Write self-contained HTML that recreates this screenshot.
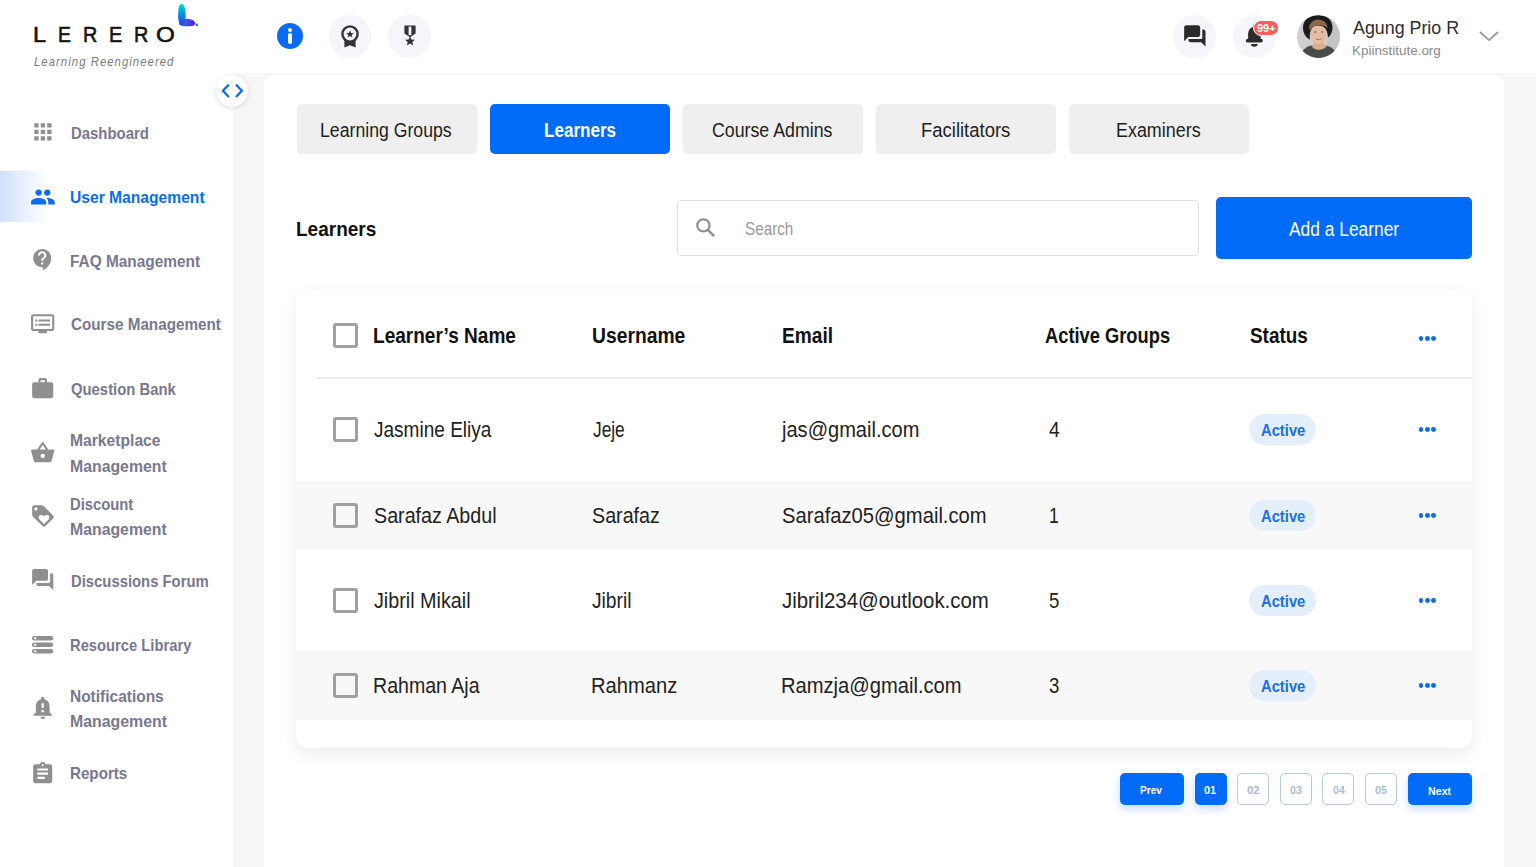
<!DOCTYPE html><html><head><meta charset="utf-8"><title>Lerero - Learners</title><style>
*{box-sizing:border-box;margin:0;padding:0}
html,body{width:1536px;height:867px;overflow:hidden;background:#f6f6f6;font-family:"Liberation Sans",sans-serif;position:relative}
.t{position:absolute;white-space:nowrap;line-height:1;transform-origin:0 50%}
.tc{position:absolute;width:600px;text-align:center;white-space:nowrap;line-height:1}
.tc span{display:inline-block;transform-origin:50% 50%}
.ic{position:absolute;overflow:visible}
.box{position:absolute}
</style></head><body>
<div class="box" style="left:0;top:0;width:232.5px;height:867px;background:#fff"></div>
<div class="t" style="left:33.01px;top:25.00px;font-size:21.5px;font-weight:normal;color:#141414;transform:scaleX(1.0909);-webkit-text-stroke:0.6px #141414">L</div>
<div class="t" style="left:58.10px;top:25.00px;font-size:21.5px;font-weight:normal;color:#141414;transform:scaleX(0.9000);-webkit-text-stroke:0.6px #141414">E</div>
<div class="t" style="left:82.68px;top:25.00px;font-size:21.5px;font-weight:normal;color:#141414;transform:scaleX(0.9214);-webkit-text-stroke:0.6px #141414">R</div>
<div class="t" style="left:109.08px;top:25.00px;font-size:21.5px;font-weight:normal;color:#141414;transform:scaleX(0.9231);-webkit-text-stroke:0.6px #141414">E</div>
<div class="t" style="left:133.68px;top:25.00px;font-size:21.5px;font-weight:normal;color:#141414;transform:scaleX(0.9214);-webkit-text-stroke:0.6px #141414">R</div>
<div class="t" style="left:156.07px;top:25.00px;font-size:21.5px;font-weight:normal;color:#141414;transform:scaleX(1.1267);-webkit-text-stroke:0.6px #141414">O</div>
<div class="t" style="left:34.10px;top:56.00px;font-size:12px;font-weight:normal;color:#7a7a7a;transform:scaleX(0.9455);font-style:italic;letter-spacing:1.1px">Learning Reengineered</div>
<svg class="ic" style="left:176px;top:2px;width:24px;height:26px" viewBox="0 0 24 26">
<defs><linearGradient id="lg1" x1="0" y1="0" x2="0" y2="1"><stop offset="0" stop-color="#00d8e0"/><stop offset="0.55" stop-color="#0a86e4"/><stop offset="1" stop-color="#4a30ee"/></linearGradient>
<linearGradient id="lg2" x1="0" y1="0" x2="1" y2="0"><stop offset="0" stop-color="#0c8ee2"/><stop offset="1" stop-color="#6a12ee"/></linearGradient></defs>
<path d="M3 20.5 C4.5 16.5 12 15.6 17.5 18.6 C20.2 20.2 19.6 23.8 16 24.1 C11 24.6 5.5 24.4 3.5 23 Z" fill="url(#lg2)"/>
<path d="M5.6 2.1 C8.6 2.1 9.8 8 9.6 14 C9.4 19.5 8.2 23.2 5.8 23.2 C3.2 23.2 2.1 19 2.1 13 C2.1 7 3 2.1 5.6 2.1 Z" fill="url(#lg1)"/>
<circle cx="20.8" cy="22.9" r="1.4" fill="#1a86e8"/>
</svg>
<div class="box" style="left:0;top:171px;width:233px;height:51px;background:linear-gradient(90deg,#cfe0fa 0px,rgba(226,236,252,0.9) 20px,rgba(255,255,255,0) 50px)"></div>
<div class="t" style="left:70.51px;top:126.00px;font-size:16.7px;font-weight:bold;color:#78788e;transform:scaleX(0.8934);">Dashboard</div>
<div class="t" style="left:69.86px;top:190.00px;font-size:16.7px;font-weight:bold;color:#0a6cf0;transform:scaleX(0.9365);">User Management</div>
<div class="t" style="left:69.88px;top:254.00px;font-size:16.7px;font-weight:bold;color:#78788e;transform:scaleX(0.9225);">FAQ Management</div>
<div class="t" style="left:70.80px;top:317.00px;font-size:16.7px;font-weight:bold;color:#78788e;transform:scaleX(0.9127);">Course Management</div>
<div class="t" style="left:71.00px;top:382.00px;font-size:16.7px;font-weight:bold;color:#78788e;transform:scaleX(0.8896);">Question Bank</div>
<div class="t" style="left:70.06px;top:433.00px;font-size:16.7px;font-weight:bold;color:#78788e;transform:scaleX(0.9382);">Marketplace</div>
<div class="t" style="left:70.05px;top:459.00px;font-size:16.7px;font-weight:bold;color:#78788e;transform:scaleX(0.9483);">Management</div>
<div class="t" style="left:70.11px;top:497.00px;font-size:16.7px;font-weight:bold;color:#78788e;transform:scaleX(0.8866);">Discount</div>
<div class="t" style="left:70.05px;top:522.00px;font-size:16.7px;font-weight:bold;color:#78788e;transform:scaleX(0.9483);">Management</div>
<div class="t" style="left:70.51px;top:574.00px;font-size:16.7px;font-weight:bold;color:#78788e;transform:scaleX(0.8894);">Discussions Forum</div>
<div class="t" style="left:70.12px;top:638.00px;font-size:16.7px;font-weight:bold;color:#78788e;transform:scaleX(0.8840);">Resource Library</div>
<div class="t" style="left:70.07px;top:689.00px;font-size:16.7px;font-weight:bold;color:#78788e;transform:scaleX(0.9271);">Notifications</div>
<div class="t" style="left:70.05px;top:714.00px;font-size:16.7px;font-weight:bold;color:#78788e;transform:scaleX(0.9503);">Management</div>
<div class="t" style="left:70.09px;top:766.00px;font-size:16.7px;font-weight:bold;color:#78788e;transform:scaleX(0.9082);">Reports</div>
<svg class="ic" style="left:29.65px;top:119.35px;width:25.80px;height:25.80px" viewBox="0 0 24 24"><path fill="#8f8f8f" d="M4 8h4V4H4v4zm6 12h4v-4h-4v4zm-6 0h4v-4H4v4zm0-6h4v-4H4v4zm6 0h4v-4h-4v4zm6-10v4h4V4h-4zm-6 4h4V4h-4v4zm6 6h4v-4h-4v4zm0 6h4v-4h-4v4z"/></svg>
<svg class="ic" style="left:29.79px;top:183.54px;width:25.82px;height:25.82px" viewBox="0 0 24 24"><path fill="#0a6cf0" d="M16 11c1.66 0 2.99-1.34 2.99-3S17.66 5 16 5c-1.66 0-3 1.34-3 3s1.34 3 3 3zm-8 0c1.66 0 2.99-1.34 2.99-3S9.66 5 8 5C6.34 5 5 6.34 5 8s1.34 3 3 3zm0 2c-2.33 0-7 1.170-7 3.5V19h14v-2.5c0-2.33-4.67-3.5-7-3.5zm8 0c-.29 0-.62.02-.97.05 1.16.84 1.970 1.97 1.97 3.45V19h6v-2.5c0-2.33-4.67-3.5-7-3.5z"/></svg>
<svg class="ic" style="left:30.29px;top:247.31px;width:25.49px;height:25.49px" viewBox="0 0 24 24"><path fill="#8f8f8f" d="M11.5 2C6.81 2 3 5.81 3 10.5S6.81 19 11.5 19h.5v3c4.86-2.34 8-7 8-11.5C20 5.81 16.19 2 11.5 2zm1 14.5h-2v-2h2v2zm0-3.5h-2c0-3.25 3-3 3-5 0-1.1-.9-2-2-2s-2 .9-2 2h-2c0-2.210 1.79-4 4-4s4 1.79 4 4c0 2.5-3 2.75-3 5z"/></svg>
<svg class="ic" style="left:30.13px;top:311.43px;width:25.35px;height:25.35px" viewBox="0 0 24 24"><path fill="#8f8f8f" d="M21 3H3c-1.1 0-2 .9-2 2v12c0 1.1.9 2 2 2h5v2h8v-2h5c1.1 0 1.99-.9 1.99-2L23 5c0-1.1-.9-2-2-2zm0 14H3V5h18v12zm-2-9H8v2h11V8zm0 4H8v2h11v-2zM7 8H5v2h2V8zm0 4H5v2h2v-2z"/></svg>
<svg class="ic" style="left:29.95px;top:375.93px;width:25.41px;height:25.41px" viewBox="0 0 24 24"><path fill="#8f8f8f" d="M20 6h-4V4c0-1.11-.89-2-2-2h-4c-1.11 0-2 .89-2 2v2H4c-1.11 0-1.99.89-1.99 2L2 19c0 1.11.89 2 2 2h16c1.11 0 2-.89 2-2V8c0-1.11-.89-2-2-2zm-6 0h-4V4h4v2z"/></svg>
<svg class="ic" style="left:29.93px;top:439.81px;width:25.45px;height:25.45px" viewBox="0 0 24 24"><path fill="#8f8f8f" d="M17.21 9l-4.38-6.56c-.19-.28-.51-.42-.83-.42-.32 0-.64.14-.83.43L6.79 9H2c-.55 0-1 .45-1 1 0 .09.01.18.04.27l2.54 9.27c.23.84 1 1.46 1.92 1.46h13c.92 0 1.69-.62 1.93-1.460l2.54-9.27L23 10c0-.55-.45-1-1-1h-4.79zM9 9l3-4.4L15 9H9zm3 8c-1.1 0-2-.9-2-2s.9-2 2-2 2 .9 2 2-.9 2-2 2z"/></svg>
<svg class="ic" style="left:29.72px;top:503.17px;width:25.86px;height:25.86px" viewBox="0 0 24 24"><path fill="#8f8f8f" d="M21.41 11.58l-9-9C12.05 2.22 11.55 2 11 2H4c-1.1 0-2 .9-2 2v7c0 .55.22 1.05.59 1.42l9 9c.36.36.86.58 1.41.58.55 0 1.05-.22 1.41-.59l7-7c.37-.36.59-.86.59-1.41 0-.55-.23-1.06-.59-1.42zM5.5 7C4.67 7 4 6.33 4 5.5S4.67 4 5.5 4 7 4.67 7 5.5 6.33 7 5.5 7zm11.77 8.27L13 19.54l-4.27-4.27C8.28 14.81 8 14.19 8 13.5c0-1.38 1.12-2.5 2.5-2.5.69 0 1.32.28 1.77.74l.73.72.73-.73c.45-.45 1.08-.73 1.77-.73 1.38 0 2.5 1.12 2.5 2.5 0 .69-.28 1.32-.73 1.77z"/></svg>
<svg class="ic" style="left:29.88px;top:566.78px;width:25.44px;height:25.44px" viewBox="0 0 24 24"><path fill="#8f8f8f" d="M20 6h-1v8c0 .55-.45 1-1 1H6v1c0 1.1.9 2 2 2h10l4 4V8c0-1.1-.9-2-2-2zm-3 5V4c0-1.1-.9-2-2-2H4c-1.1 0-2 .9-2 2v13l4-4h9c1.1 0 2-.9 2-2z"/></svg>
<svg class="ic" style="left:32px;top:635.5px;width:21.2px;height:17.5px" viewBox="0 0 21.2 17.5">
<rect x="0" y="0" width="21.2" height="4.5" rx="2.25" fill="#8f8f8f"/>
<rect x="0" y="6.5" width="21.2" height="4.5" rx="2.25" fill="#8f8f8f"/>
<rect x="0" y="13" width="21.2" height="4.5" rx="2.25" fill="#8f8f8f"/>
<rect x="2.1" y="1.2" width="2.2" height="2.1" rx="0.6" fill="#fff"/>
<rect x="2.1" y="7.7" width="2.2" height="2.1" rx="0.6" fill="#fff"/>
<rect x="2.1" y="14.2" width="2.2" height="2.1" rx="0.6" fill="#fff"/>
</svg>
<svg class="ic" style="left:29.03px;top:694.18px;width:27.44px;height:27.44px" viewBox="0 0 24 24"><path fill="#8f8f8f" d="M18 16v-5c0-3.07-1.64-5.64-4.5-6.32V4c0-.83-.67-1.5-1.5-1.5s-1.5.67-1.5 1.5v.68C7.63 5.36 6 7.92 6 11v5l-2 2v1h16v-1l-2-2zm-5 0h-2v-2h2v2zm0-4h-2V8h2v4zm-1 10c1.1 0 2-.9 2-2h-4c0 1.1.89 2 2 2z"/></svg>
<svg class="ic" style="left:29.98px;top:760.78px;width:25.35px;height:25.35px" viewBox="0 0 24 24"><path fill="#8f8f8f" d="M19 3h-4.18C14.4 1.84 13.3 1 12 1c-1.3 0-2.4.84-2.820 2H5c-1.1 0-2 .9-2 2v14c0 1.1.9 2 2 2h14c1.1 0 2-.9 2-2V5c0-1.1-.9-2-2-2zm-7 0c.55 0 1 .45 1 1s-.45 1-1 1-1-.45-1-1 .45-1 1-1zm2 14H7v-2h7v2zm3-4H7v-2h10v2zm0-4H7V7h10v2z"/></svg>
<div class="box" style="left:233px;top:0;width:1303px;height:73px;background:#fff"></div>
<div class="box" style="left:277px;top:23px;width:26px;height:26px;border-radius:50%;background:#0a6cf5"></div>
<div class="box" style="left:288.1px;top:28.3px;width:3.8px;height:3.8px;border-radius:50%;background:#fff"></div>
<div class="box" style="left:288.1px;top:33.4px;width:3.8px;height:10.7px;border-radius:2px;background:#fff"></div>
<div class="box" style="left:328.5px;top:15px;width:42.5px;height:42.5px;border-radius:50%;background:#f4f6fa"></div>
<svg class="ic" style="left:338px;top:24px;width:24px;height:25px" viewBox="0 0 24 25">
<path d="M6.4 12.5 L6.4 23.6 L12 21.3 L17.6 23.6 L17.6 12.5 Z" fill="#333"/>
<circle cx="12" cy="10" r="7.6" fill="#f4f6fa" stroke="#333" stroke-width="2.4"/>
<path d="M12 6.3 L13.1 8.9 L15.8 9.1 L13.7 10.9 L14.4 13.6 L12 12.1 L9.6 13.6 L10.3 10.9 L8.2 9.1 L10.9 8.9 Z" fill="#333"/>
</svg>
<div class="box" style="left:388.2px;top:15px;width:42.5px;height:42.5px;border-radius:50%;background:#f4f6fa"></div>
<svg class="ic" style="left:399.5px;top:25px;width:20px;height:22px" viewBox="0 0 20 22">
<path d="M4.4 0.5 H15.6 V8.6 L10 12.2 L4.4 8.6 Z" fill="#333"/>
<rect x="8.6" y="1.6" width="2.8" height="8.6" fill="#f4f6fa"/>
<path d="M10 11 L11.4 14.4 L15 14.7 L12.3 17 L13.2 20.6 L10 18.6 L6.8 20.6 L7.7 17 L5 14.7 L8.6 14.4 Z" fill="#333"/>
</svg>
<div class="box" style="left:1173px;top:14.8px;width:43px;height:43px;border-radius:50%;background:#f4f6fa"></div>
<svg class="ic" style="left:1181.75px;top:23.02px;width:25.65px;height:25.65px" viewBox="0 0 24 24"><path fill="#2b2b2b" d="M20 6h-1v8c0 .55-.45 1-1 1H6v1c0 1.1.9 2 2 2h10l4 4V8c0-1.1-.9-2-2-2zm-3 5V4c0-1.1-.9-2-2-2H4c-1.1 0-2 .9-2 2v13l4-4h9c1.1 0 2-.9 2-2z"/></svg>
<div class="box" style="left:1233px;top:14.8px;width:43px;height:43px;border-radius:50%;background:#f4f6fa"></div>
<svg class="ic" style="left:1245px;top:24px;width:19px;height:24px" viewBox="0 0 19 24">
<path d="M3.1 15.5 L3.1 10.5 C3.1 6 5.6 3.1 9.35 2.8 C13.1 3.1 15.6 6 15.6 10.5 L15.6 15.5 Z" fill="#2b2b2b"/>
<rect x="8.2" y="0.6" width="2.3" height="3.5" rx="1.1" fill="#2b2b2b"/>
<rect x="0.9" y="14.8" width="16.9" height="3.8" rx="1.9" fill="#2b2b2b"/>
<path d="M6 20.1 A3.35 2.7 0 0 0 12.7 20.1 Z" fill="#2b2b2b"/>
</svg>
<div class="box" style="left:1252.8px;top:19.5px;width:26.6px;height:16.3px;border-radius:8.2px;background:#fb5b5b;border:1.6px solid #fff"></div>
<div class="t" style="left:1256.80px;top:23.00px;font-size:11px;font-weight:bold;color:#fff;transform:scaleX(0.9981);">99+</div>
<svg class="ic" style="left:1297px;top:14.6px;width:43px;height:43px" viewBox="0 0 43 43">
<defs><clipPath id="av"><circle cx="21.5" cy="21.5" r="21.4"/></clipPath></defs>
<g clip-path="url(#av)">
<rect width="43" height="43" fill="#cfcfcf"/>
<rect x="30" y="0" width="13" height="43" fill="#c4c4c4"/>
<path d="M2 46 C3 36 9 31 15 30.5 L28 30.5 C34 31 40 35 42 46 Z" fill="#494d47"/>
<path d="M14.5 30.5 C16 36 27 36.5 30 30.5 Z" fill="#d9ae94"/>
<rect x="16.5" y="24" width="10" height="8" fill="#d8ad92"/>
<ellipse cx="21.3" cy="19" rx="8.2" ry="10.6" fill="#e3bca3"/>
<path d="M6 13 C6 4 13 0.3 21 0.3 C29 0.3 35.5 4 35.5 12.5 C35.5 17 33.5 21 31 22.5 C30.5 14 27 10.5 21 10.5 C15 10.5 12.5 15 12.8 23 C12.5 25 14 25.5 13.5 25 C9 23 6 18 6 13 Z" fill="#1b1b1b"/>
<path d="M12 12 C14 6 18 4.5 22 4.8 C26.5 5 30 7.5 30.5 13 C28 10.8 25 10 21.5 10.2 C17 10.5 14 12 12.8 15.5 Z" fill="#8a6a48"/>
<ellipse cx="18.3" cy="17" rx="1.1" ry="0.7" fill="#6b5a50"/>
<ellipse cx="25.2" cy="17" rx="1.1" ry="0.7" fill="#6b5a50"/>
<path d="M18.8 24 Q22 25.2 25 23.8" stroke="#b47d72" stroke-width="1.1" fill="none"/>
</g></svg>
<div class="t" style="left:1353.00px;top:18.00px;font-size:19px;font-weight:normal;color:#2d2d2d;transform:scaleX(0.9387);">Agung Prio R</div>
<div class="t" style="left:1352.01px;top:44.00px;font-size:13.5px;font-weight:normal;color:#8a8a8a;transform:scaleX(0.9944);">Kpiinstitute.org</div>
<svg class="ic" style="left:1479px;top:31px;width:20px;height:11px" viewBox="0 0 20 11"><path d="M1.5 1.5 L10 9.2 L18.5 1.5" stroke="#9a9a9a" stroke-width="1.8" fill="none" stroke-linecap="round" stroke-linejoin="round"/></svg>
<div class="box" style="left:264px;top:75px;width:1240px;height:800px;background:#fff;border-radius:9px 9px 0 0"></div>
<div class="box" style="left:216px;top:75px;width:32px;height:32px;border-radius:50%;background:#fff;box-shadow:0 1px 4px rgba(0,0,0,0.14)"></div>
<svg class="ic" style="left:220px;top:83px;width:24px;height:16px" viewBox="0 0 24 16"><path d="M8.2 2.3 L2.9 7.8 L8.2 13.3 M16.6 2.3 L21.9 7.8 L16.6 13.3" stroke="#0a6cf5" stroke-width="2.3" fill="none" stroke-linecap="round" stroke-linejoin="round"/></svg>
<div class="box" style="left:296.5px;top:104px;width:180.5px;height:50px;border-radius:5px;background:#efefef"></div>
<div class="t" style="left:320.32px;top:120.00px;font-size:20px;font-weight:normal;color:#1e1e1e;transform:scaleX(0.8839);">Learning Groups</div>
<div class="box" style="left:489.5px;top:104px;width:180.5px;height:50px;border-radius:5px;background:#006bf6"></div>
<div class="t" style="left:543.55px;top:120.00px;font-size:20px;font-weight:bold;color:#fff;transform:scaleX(0.8528);">Learners</div>
<div class="box" style="left:682.5px;top:104px;width:180.5px;height:50px;border-radius:5px;background:#efefef"></div>
<div class="t" style="left:711.61px;top:120.00px;font-size:20px;font-weight:normal;color:#1e1e1e;transform:scaleX(0.8879);">Course Admins</div>
<div class="box" style="left:875.5px;top:104px;width:180.5px;height:50px;border-radius:5px;background:#efefef"></div>
<div class="t" style="left:920.68px;top:120.00px;font-size:20px;font-weight:normal;color:#1e1e1e;transform:scaleX(0.9238);">Facilitators</div>
<div class="box" style="left:1068.5px;top:104px;width:180.5px;height:50px;border-radius:5px;background:#efefef"></div>
<div class="t" style="left:1116.10px;top:120.00px;font-size:20px;font-weight:normal;color:#1e1e1e;transform:scaleX(0.8954);">Examiners</div>
<div class="t" style="left:295.89px;top:218.00px;font-size:21px;font-weight:bold;color:#111;transform:scaleX(0.9054);">Learners</div>
<div class="box" style="left:676.5px;top:200px;width:522.5px;height:56px;border:1px solid #e2e2e2;border-radius:4px;background:#fff"></div>
<svg class="ic" style="left:690px;top:212px;width:30px;height:30px" viewBox="0 0 30 30"><circle cx="13.4" cy="13.4" r="6.1" fill="none" stroke="#8e8e8e" stroke-width="2.2"/><path d="M17.8 17.8 L24.2 24.2" stroke="#8e8e8e" stroke-width="2.5" stroke-linecap="butt"/></svg>
<div class="t" style="left:744.60px;top:220.00px;font-size:18.5px;font-weight:normal;color:#9a9a9a;transform:scaleX(0.8247);">Search</div>
<div class="box" style="left:1216px;top:197.4px;width:256px;height:61.5px;border-radius:5px;background:#006bf6"></div>
<div class="t" style="left:1288.60px;top:219.00px;font-size:20px;font-weight:normal;color:#fff;transform:scaleX(0.8686);">Add a Learner</div>
<div class="box" style="left:296px;top:290px;width:1176px;height:457.5px;border-radius:12px;background:#fff;box-shadow:0 6px 16px rgba(0,0,0,0.08)"></div>
<div class="box" style="left:317px;top:377.2px;width:1155px;height:1.6px;background:#ececec"></div>
<div class="box" style="left:296px;top:480.5px;width:1176px;height:68.5px;background:#f8f8f8"></div>
<div class="box" style="left:296px;top:651.3px;width:1176px;height:68.7px;background:#f8f8f8"></div>
<div class="box" style="left:333px;top:323.00px;width:25px;height:25px;border:3px solid #a0a0a0;border-radius:3px"></div>
<div class="t" style="left:372.91px;top:326.00px;font-size:21.5px;font-weight:bold;color:#111;transform:scaleX(0.8860);">Learner’s Name</div>
<div class="t" style="left:591.60px;top:326.00px;font-size:21.5px;font-weight:bold;color:#111;transform:scaleX(0.8979);">Username</div>
<div class="t" style="left:781.81px;top:326.00px;font-size:21.5px;font-weight:bold;color:#111;transform:scaleX(0.8901);">Email</div>
<div class="t" style="left:1044.50px;top:326.00px;font-size:21.5px;font-weight:bold;color:#111;transform:scaleX(0.8511);">Active Groups</div>
<div class="t" style="left:1249.70px;top:326.00px;font-size:21.5px;font-weight:bold;color:#111;transform:scaleX(0.8791);">Status</div>
<div class="box" style="left:1418.60px;top:335.85px;width:4.9px;height:4.9px;border-radius:50%;background:#0a6cf5"></div>
<div class="box" style="left:1425.00px;top:335.85px;width:4.9px;height:4.9px;border-radius:50%;background:#0a6cf5"></div>
<div class="box" style="left:1431.40px;top:335.85px;width:4.9px;height:4.9px;border-radius:50%;background:#0a6cf5"></div>
<div class="box" style="left:333px;top:416.90px;width:25px;height:25px;border:3px solid #a0a0a0;border-radius:3px"></div>
<div class="t" style="left:373.80px;top:420.00px;font-size:21.5px;font-weight:normal;color:#222;transform:scaleX(0.8849);">Jasmine Eliya</div>
<div class="t" style="left:592.50px;top:420.00px;font-size:21.5px;font-weight:normal;color:#222;transform:scaleX(0.8029);">Jeje</div>
<div class="t" style="left:782.13px;top:420.00px;font-size:21.5px;font-weight:normal;color:#222;transform:scaleX(0.9330);">jas@gmail.com</div>
<div class="t" style="left:1048.80px;top:420.00px;font-size:21.5px;font-weight:normal;color:#222;transform:scaleX(0.9000);">4</div>
<div class="box" style="left:1249px;top:414.10px;width:67.3px;height:30.7px;border-radius:16px;background:#e5effc"></div>
<div class="t" style="left:1260.70px;top:422.00px;font-size:17px;font-weight:bold;color:#1a6fe6;transform:scaleX(0.8681);">Active</div>
<div class="box" style="left:1418.60px;top:426.95px;width:4.9px;height:4.9px;border-radius:50%;background:#0a6cf5"></div>
<div class="box" style="left:1425.00px;top:426.95px;width:4.9px;height:4.9px;border-radius:50%;background:#0a6cf5"></div>
<div class="box" style="left:1431.40px;top:426.95px;width:4.9px;height:4.9px;border-radius:50%;background:#0a6cf5"></div>
<div class="box" style="left:333px;top:502.90px;width:25px;height:25px;border:3px solid #a0a0a0;border-radius:3px"></div>
<div class="t" style="left:373.75px;top:506.00px;font-size:21.5px;font-weight:normal;color:#222;transform:scaleX(0.9156);">Sarafaz Abdul</div>
<div class="t" style="left:592.00px;top:506.00px;font-size:21.5px;font-weight:normal;color:#222;transform:scaleX(0.9162);">Sarafaz</div>
<div class="t" style="left:782.00px;top:506.00px;font-size:21.5px;font-weight:normal;color:#222;transform:scaleX(0.9396);">Sarafaz05@gmail.com</div>
<div class="t" style="left:1049.48px;top:506.00px;font-size:21.5px;font-weight:normal;color:#222;transform:scaleX(0.8200);">1</div>
<div class="box" style="left:1249px;top:500.10px;width:67.3px;height:30.7px;border-radius:16px;background:#e5effc"></div>
<div class="t" style="left:1260.70px;top:508.00px;font-size:17px;font-weight:bold;color:#1a6fe6;transform:scaleX(0.8681);">Active</div>
<div class="box" style="left:1418.60px;top:512.95px;width:4.9px;height:4.9px;border-radius:50%;background:#0a6cf5"></div>
<div class="box" style="left:1425.00px;top:512.95px;width:4.9px;height:4.9px;border-radius:50%;background:#0a6cf5"></div>
<div class="box" style="left:1431.40px;top:512.95px;width:4.9px;height:4.9px;border-radius:50%;background:#0a6cf5"></div>
<div class="box" style="left:333px;top:587.90px;width:25px;height:25px;border:3px solid #a0a0a0;border-radius:3px"></div>
<div class="t" style="left:373.75px;top:591.00px;font-size:21.5px;font-weight:normal;color:#222;transform:scaleX(0.9186);">Jibril Mikail</div>
<div class="t" style="left:592.00px;top:591.00px;font-size:21.5px;font-weight:normal;color:#222;transform:scaleX(0.8936);">Jibril</div>
<div class="t" style="left:782.00px;top:591.00px;font-size:21.5px;font-weight:normal;color:#222;transform:scaleX(0.9497);">Jibril234@outlook.com</div>
<div class="t" style="left:1049.30px;top:591.00px;font-size:21.5px;font-weight:normal;color:#222;transform:scaleX(0.8667);">5</div>
<div class="box" style="left:1249px;top:585.10px;width:67.3px;height:30.7px;border-radius:16px;background:#e5effc"></div>
<div class="t" style="left:1260.70px;top:593.00px;font-size:17px;font-weight:bold;color:#1a6fe6;transform:scaleX(0.8681);">Active</div>
<div class="box" style="left:1418.60px;top:597.95px;width:4.9px;height:4.9px;border-radius:50%;background:#0a6cf5"></div>
<div class="box" style="left:1425.00px;top:597.95px;width:4.9px;height:4.9px;border-radius:50%;background:#0a6cf5"></div>
<div class="box" style="left:1431.40px;top:597.95px;width:4.9px;height:4.9px;border-radius:50%;background:#0a6cf5"></div>
<div class="box" style="left:333px;top:672.90px;width:25px;height:25px;border:3px solid #a0a0a0;border-radius:3px"></div>
<div class="t" style="left:373.09px;top:676.00px;font-size:21.5px;font-weight:normal;color:#222;transform:scaleX(0.9101);">Rahman Aja</div>
<div class="t" style="left:591.06px;top:676.00px;font-size:21.5px;font-weight:normal;color:#222;transform:scaleX(0.9383);">Rahmanz</div>
<div class="t" style="left:781.06px;top:676.00px;font-size:21.5px;font-weight:normal;color:#222;transform:scaleX(0.9373);">Ramzja@gmail.com</div>
<div class="t" style="left:1049.30px;top:676.00px;font-size:21.5px;font-weight:normal;color:#222;transform:scaleX(0.8667);">3</div>
<div class="box" style="left:1249px;top:670.10px;width:67.3px;height:30.7px;border-radius:16px;background:#e5effc"></div>
<div class="t" style="left:1260.70px;top:678.00px;font-size:17px;font-weight:bold;color:#1a6fe6;transform:scaleX(0.8681);">Active</div>
<div class="box" style="left:1418.60px;top:682.95px;width:4.9px;height:4.9px;border-radius:50%;background:#0a6cf5"></div>
<div class="box" style="left:1425.00px;top:682.95px;width:4.9px;height:4.9px;border-radius:50%;background:#0a6cf5"></div>
<div class="box" style="left:1431.40px;top:682.95px;width:4.9px;height:4.9px;border-radius:50%;background:#0a6cf5"></div>
<div class="box" style="left:1120px;top:773px;width:64px;height:32px;border-radius:5px;background:#006bf6;box-shadow:0 4px 10px rgba(0,90,240,0.22)"></div>
<div class="t" style="left:1139.60px;top:784.00px;font-size:11.6px;font-weight:bold;color:#fff;transform:scaleX(0.8718);">Prev</div>
<div class="box" style="left:1195px;top:773px;width:32px;height:32px;border-radius:5px;background:#006bf6;box-shadow:0 4px 10px rgba(0,90,240,0.22)"></div>
<div class="t" style="left:1203.60px;top:784.00px;font-size:11.6px;font-weight:bold;color:#fff;transform:scaleX(0.9444);">01</div>
<div class="box" style="left:1236.90px;top:773px;width:32px;height:32px;border-radius:5px;border:1px solid #b8c9de;background:#fff"></div>
<div class="t" style="left:1247.10px;top:784.00px;font-size:11.6px;font-weight:bold;color:#aabdd5;transform:scaleX(0.9881);">02</div>
<div class="box" style="left:1279.60px;top:773px;width:32px;height:32px;border-radius:5px;border:1px solid #b8c9de;background:#fff"></div>
<div class="t" style="left:1289.80px;top:784.00px;font-size:11.6px;font-weight:bold;color:#aabdd5;transform:scaleX(0.9146);">03</div>
<div class="box" style="left:1322.30px;top:773px;width:32px;height:32px;border-radius:5px;border:1px solid #b8c9de;background:#fff"></div>
<div class="t" style="left:1332.50px;top:784.00px;font-size:11.6px;font-weight:bold;color:#aabdd5;transform:scaleX(0.9146);">04</div>
<div class="box" style="left:1365.00px;top:773px;width:32px;height:32px;border-radius:5px;border:1px solid #b8c9de;background:#fff"></div>
<div class="t" style="left:1375.20px;top:784.00px;font-size:11.6px;font-weight:bold;color:#aabdd5;transform:scaleX(0.9146);">05</div>
<div class="box" style="left:1408px;top:773px;width:64px;height:32px;border-radius:5px;background:#006bf6;box-shadow:0 4px 10px rgba(0,90,240,0.22)"></div>
<div class="t" style="left:1427.80px;top:785.00px;font-size:11.6px;font-weight:bold;color:#fff;transform:scaleX(0.9221);">Next</div>
</body></html>
